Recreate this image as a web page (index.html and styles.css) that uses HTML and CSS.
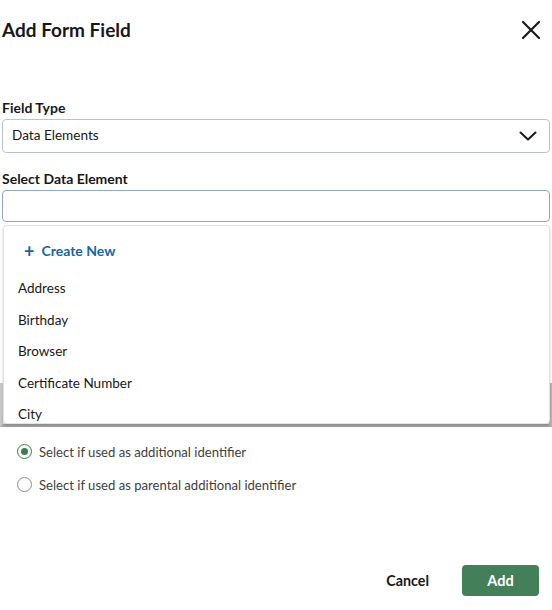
FILE: index.html
```html
<!DOCTYPE html>
<html lang="en">
<head>
<meta charset="utf-8">
<title>Add Form Field</title>
<link rel="stylesheet" href="styles.css">
</head>
<body>
<div class="modal">
  <div class="header">
    <h1 class="title">Add Form Field</h1>
    <button class="close" aria-label="Close">
      <svg width="20" height="20" viewBox="0 0 20 20"><path d="M2 2 L18 18 M18 2 L2 18" stroke="#1a1a1a" stroke-width="2.2" fill="none" stroke-linecap="round"/></svg>
    </button>
  </div>

  <div class="field first">
    <div class="label">Field Type</div>
    <div class="select">
      <span>Data Elements</span>
      <svg width="18" height="10" viewBox="0 0 18 10"><path d="M1.5 1.5 L9 8.5 L16.5 1.5" stroke="#1a1a1a" stroke-width="2" fill="none" stroke-linecap="round" stroke-linejoin="round"/></svg>
    </div>
  </div>

  <div class="field">
    <div class="label">Select Data Element</div>
    <div class="combo">
      <div class="input"></div>
      <div class="dropdown">
        <div class="create"><span class="plus">+</span>Create New</div>
        <div class="item">Address</div>
        <div class="item">Birthday</div>
        <div class="item">Browser</div>
        <div class="item">Certificate Number</div>
        <div class="item">City</div>
      </div>
    </div>
  </div>

  <div class="underlay"></div>

  <div class="radios">
    <label class="radio"><span class="dot checked"></span>Select if used as additional identifier</label>
    <label class="radio"><span class="dot"></span>Select if used as parental additional identifier</label>
  </div>

  <div class="footer">
    <button class="cancel">Cancel</button>
    <button class="add">Add</button>
  </div>
</div>
</body>
</html>
```

FILE: styles.css
```css
* { box-sizing: border-box; }
html, body { margin: 0; padding: 0; background: #fff; }
body {
  font-family: Lato, "Open Sans", "Liberation Sans", sans-serif;
  color: #181818;
  width: 552px;
  height: 610px;
  overflow: hidden;
}
.modal { padding: 0 2px; }
.header {
  display: flex;
  justify-content: space-between;
  align-items: center;
  padding-top: 17px;
  height: 43px;
}
.title {
  margin: 0;
  font-size: 19px;
  font-weight: 700;
  line-height: 24px;
  color: #181818;
}
.close {
  border: 0;
  background: none;
  padding: 0;
  margin-right: 9px;
  width: 20px;
  height: 20px;
  display: flex;
}
.field.first { margin-top: 56px; }
.field { margin-top: 17px; }
.label {
  font-size: 14px;
  font-weight: 700;
  line-height: 18px;
  margin-bottom: 2px;
  color: #181818;
}
.select {
  height: 34px;
  border: 1px solid #b9c4d3;
  border-radius: 4px;
  display: flex;
  align-items: center;
  justify-content: space-between;
  padding: 0 12px 2px 9px;
  font-size: 13.6px;
  color: #181818;
}
.select svg { margin-top: 2px; }
.combo { position: relative; }
.input {
  height: 32px;
  border: 1px solid #90a9c7;
  border-radius: 4px;
}
.dropdown {
  position: absolute;
  left: 1px;
  right: 0;
  top: 35px;
  height: 199px;
  overflow: hidden;
  background: #fff;
  border: 1px solid #e3e3e3;
  border-radius: 4px;
  box-shadow: 0 2px 3px rgba(0,0,0,0.18);
  z-index: 2;
  padding-top: 12px;
}
.create {
  color: #1b63a3;
  font-size: 14px;
  font-weight: 700;
  line-height: 26px;
  padding-left: 20px;
  margin-bottom: 9px;
  display: flex;
  align-items: center;
}
.plus {
  font-size: 18px;
  font-weight: 700;
  margin-right: 7px;
  line-height: 20px;
}
.item {
  font-size: 13.5px;
  line-height: 31.5px;
  padding-left: 14px;
  color: #181818;
}
.underlay {
  margin-top: 161px;
  margin-left: -2px;
  margin-right: -2px;
  height: 44px;
  background: #f4f4f4;
  border-left: 3px solid #c8c8c8;
  border-right: 3px solid #b5b5b5;
  border-bottom: 3px solid #a9a9a9;
}
.radios {
  padding-left: 15px;
  padding-top: 8px;
}
.radio {
  display: flex;
  align-items: center;
  font-size: 13.1px;
  line-height: 20px;
  height: 33px;
  color: #3e3e3c;
}
.dot {
  width: 15px;
  height: 15px;
  border: 1px solid #8c8c8c;
  border-radius: 50%;
  margin-right: 7px;
  display: inline-flex;
  align-items: center;
  justify-content: center;
}
.dot.checked { border-color: #3b7f4f; }
.dot.checked::after {
  content: "";
  width: 7px;
  height: 7px;
  border-radius: 50%;
  background: #3b7f4f;
}
.footer {
  display: flex;
  justify-content: flex-end;
  align-items: center;
  margin-top: 64px;
  padding-right: 11px;
  gap: 33px;
}
.cancel {
  border: 0;
  background: none;
  font-family: inherit;
  font-size: 14.3px;
  font-weight: 700;
  color: #181818;
  padding: 0;
}
.add {
  width: 77px;
  height: 31px;
  border: 0;
  border-radius: 4px;
  background: #43805a;
  color: #fff;
  font-family: inherit;
  font-size: 14.5px;
  font-weight: 700;
}
```
